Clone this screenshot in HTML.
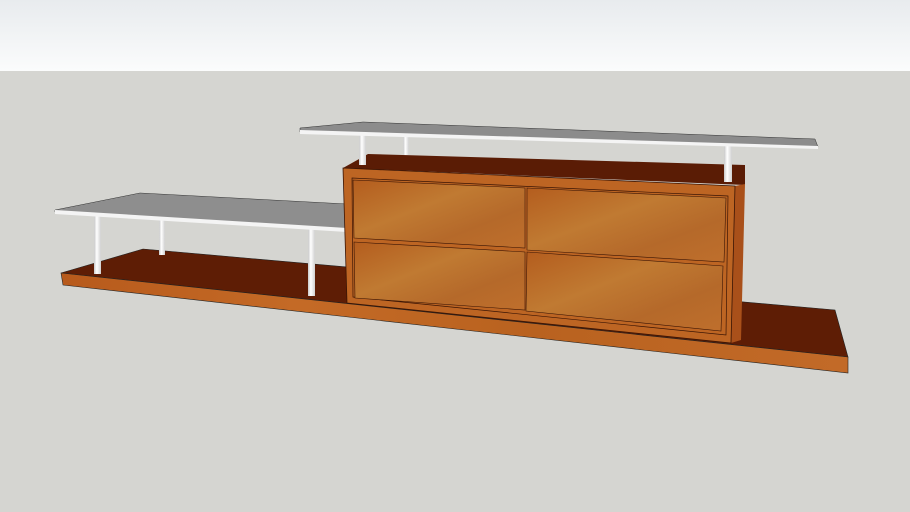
<!DOCTYPE html>
<html><head><style>
html,body{margin:0;padding:0;width:910px;height:512px;overflow:hidden;background:#d5d5d1}
</style></head><body>
<svg width="910" height="512" viewBox="0 0 910 512" xmlns="http://www.w3.org/2000/svg">
<defs>
<linearGradient id="sky" x1="0" y1="0" x2="0" y2="1"><stop offset="0" stop-color="#e8ebee"/><stop offset="1" stop-color="#fbfcfc"/></linearGradient>
<linearGradient id="wood" x1="0" y1="0" x2="1" y2="0"><stop offset="0" stop-color="#b75a1c"/><stop offset=".3" stop-color="#c46a26"/><stop offset=".6" stop-color="#b9621f"/><stop offset="1" stop-color="#c26a28"/></linearGradient>
<linearGradient id="pan" x1="0" y1="0" x2="1" y2="1"><stop offset="0" stop-color="#b45d1e"/><stop offset=".4" stop-color="#c07a32"/><stop offset=".7" stop-color="#b5692a"/><stop offset="1" stop-color="#bf6f2c"/></linearGradient>
<linearGradient id="leg" x1="0" y1="0" x2="1" y2="0"><stop offset="0" stop-color="#c8c8c8"/><stop offset=".4" stop-color="#ffffff"/><stop offset="1" stop-color="#d0d0d0"/></linearGradient>
</defs>
<rect width="910" height="71" fill="url(#sky)"/>
<rect y="71" width="910" height="441" fill="#d5d5d1"/>
<!-- base -->
<polygon points="61,273 143,249 835,310 848,357" fill="#5e1d05" stroke="#222" stroke-width=".6"/>
<polygon points="61,273 848,357 848,373 63,285" fill="url(#wood)" stroke="#222" stroke-width=".6"/>
<!-- left shelf legs -->
<rect x="159" y="218" width="6" height="37" fill="url(#leg)"/>
<rect x="94" y="214" width="7" height="60" fill="url(#leg)"/>
<rect x="308" y="229" width="7" height="67" fill="url(#leg)"/>
<!-- left shelf -->
<polygon points="55,210 140,193 347,204 347,230 55,212" fill="#8e8e8e" stroke="#333" stroke-width=".5"/>
<polygon points="55,210 347,228 347,232 55,214" fill="#f4f4f4"/>
<!-- cabinet top -->
<polygon points="343,168 368,154 745,165 745,185" fill="#5a1c05"/>
<!-- cabinet side -->
<polygon points="735,186 745,184 741,340 731,343" fill="#a9501a"/>
<!-- cabinet front -->
<polygon points="343,168 735,186 731,343 347,303" fill="#bd6523" stroke="#3a1505" stroke-width=".8"/>
<polygon points="352,178 728,196 726,335 353,297" fill="none" stroke="#3a1505" stroke-width=".7"/>
<polygon points="353,180 525,188 525,248 354,238" fill="url(#pan)" stroke="#3a1505" stroke-width=".6"/>
<polygon points="527,188 726,198 724,262 527,250" fill="url(#pan)" stroke="#3a1505" stroke-width=".6"/>
<polygon points="354,242 525,252 525,310 355,298" fill="url(#pan)" stroke="#3a1505" stroke-width=".6"/>
<polygon points="527,252 723,266 721,331 526,311" fill="url(#pan)" stroke="#3a1505" stroke-width=".6"/>
<!-- top shelf legs -->
<rect x="359" y="135" width="7" height="30" fill="url(#leg)"/>
<rect x="403" y="135" width="6" height="20" fill="url(#leg)"/>
<rect x="724" y="144" width="8" height="38" fill="url(#leg)"/>
<!-- top shelf -->
<polygon points="300,128 363,122 815,139 818,147 300,132" fill="#8c8c8c" stroke="#333" stroke-width=".5"/>
<polygon points="300,130 818,146 818,149 300,134" fill="#f4f4f4"/>
</svg>
</body></html>
